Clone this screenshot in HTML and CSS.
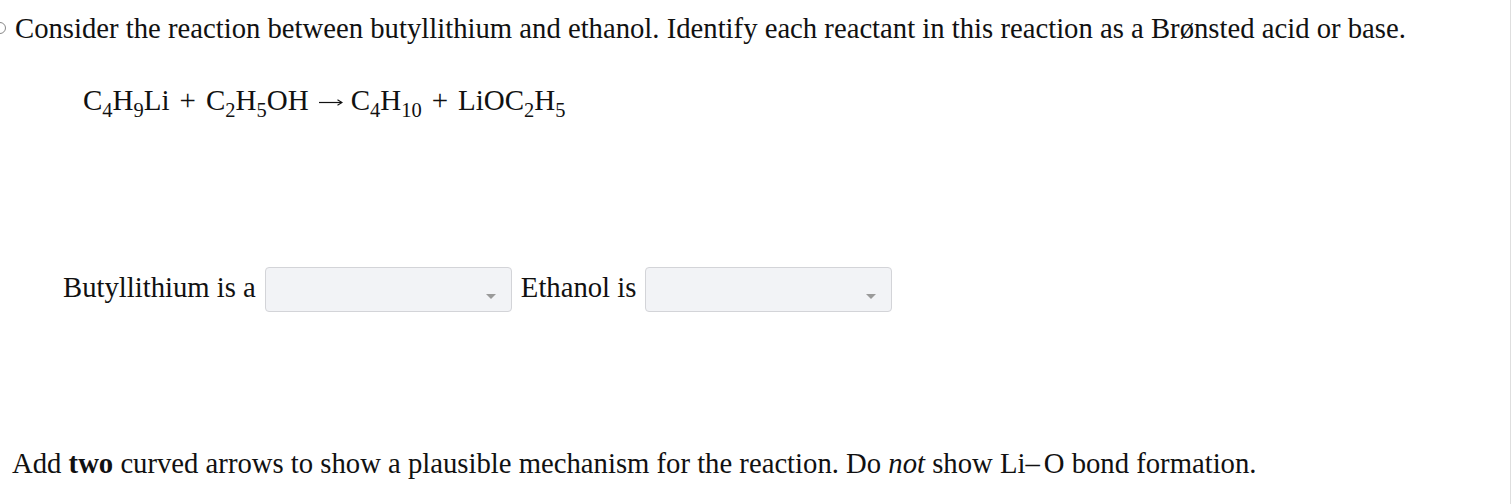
FILE: index.html
```html
<!DOCTYPE html>
<html>
<head>
<meta charset="utf-8">
<link rel="stylesheet" href="styles.css">
</head>
<body>
<div class="page">
  <div class="intro"><span class="bullet"></span>Consider the reaction between butyllithium and ethanol. Identify each reactant in this reaction as a Brønsted acid or base.</div>
  <div class="eq">C<sub>4</sub>H<sub>9</sub>Li<span class="op">+</span>C<sub>2</sub>H<sub>5</sub>OH<span class="arrow"><svg width="24" height="8" viewBox="0 0 24 8"><path d="M0 4.5H22.5" stroke="#111" stroke-width="1.2"/><path d="M18.5 1.8L23 4.5L18.5 7.2" fill="none" stroke="#111" stroke-width="1.1"/></svg></span>C<sub>4</sub>H<sub>10</sub><span class="op">+</span>LiOC<sub>2</sub>H<sub>5</sub></div>
  <div class="answers">
    <span class="label">Butyllithium is a</span>
    <span class="select"><span class="caret"></span></span>
    <span class="label">Ethanol is</span>
    <span class="select"><span class="caret"></span></span>
  </div>
  <div class="instr">Add <b>two</b> curved arrows to show a plausible mechanism for the reaction. Do <i>not</i> show Li<span class="dash">–</span>O bond formation.</div>
</div>
<div class="edge"></div>
</body>
</html>
```
FILE: styles.css
```css
html, body { margin: 0; padding: 0; background: #fff; }
body { font-family: "Liberation Serif", "Times New Roman", serif; color: #111; font-size: 28.7px; }
.page { position: relative; }
.intro { margin-top: 11px; padding-left: 15px; line-height: 34px; position: relative; }
.bullet { position: absolute; left: -6px; top: 11px; width: 12px; height: 12px; border: 1.5px solid #888; border-radius: 50%; box-sizing: border-box; }
.eq { margin-top: 38px; padding-left: 83px; line-height: 34px; height: 34px; white-space: nowrap; font-size: 29px; }
.eq sub { font-size: 20.5px; vertical-align: -7px; line-height: 0; }
.op { margin: 0 10px; }
.arrow { display: inline-block; margin: 0 8px 0 10px; vertical-align: 4px; line-height: 0; }
.answers { margin-top: 150px; padding-left: 63px; display: flex; align-items: flex-start; gap: 9px; height: 45px; }
.label { line-height: 34px; padding-top: 3px; white-space: nowrap; }
.select { width: 247px; height: 45px; box-sizing: border-box; background: #f2f3f6; border: 1px solid #d3d4d8; border-radius: 4px; position: relative; flex: none; }
.caret { position: absolute; right: 15px; top: 26px; width: 0; height: 0; border-left: 5px solid transparent; border-right: 5px solid transparent; border-top: 5px solid #9a9a9a; }
.instr { margin-top: 134px; padding-left: 12px; line-height: 34px; white-space: nowrap; }
.dash { margin-right: 4px; }
.edge { position: absolute; right: 1px; top: 0; width: 1px; height: 504px; background: #dedede; }
```
